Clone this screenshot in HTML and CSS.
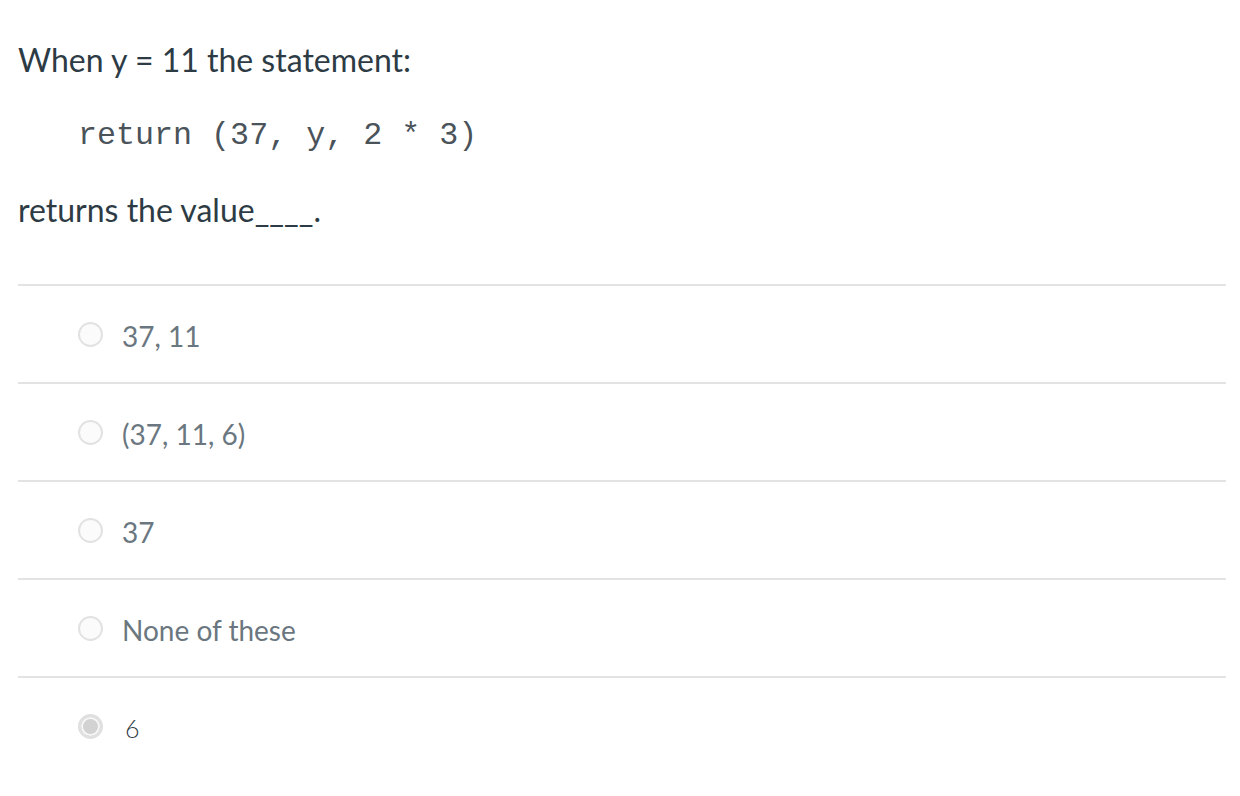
FILE: index.html
```html
<!DOCTYPE html>
<html>
<head>
<meta charset="utf-8">
<link rel="stylesheet" href="styles.css">
</head>
<body>
<div class="question">
  <p class="stem">When y = 11 the statement:</p>
  <pre class="code">return (37, y, 2 * 3)</pre>
  <p class="stem stem-end">returns the value____.</p>
  <div class="answers">
    <div class="answer"><span class="radio"></span><span class="label">37, 11</span></div>
    <div class="answer"><span class="radio"></span><span class="label">(37, 11, 6)</span></div>
    <div class="answer"><span class="radio"></span><span class="label">37</span></div>
    <div class="answer"><span class="radio"></span><span class="label">None of these</span></div>
    <div class="answer selected"><span class="radio"></span><span class="label">6</span></div>
  </div>
</div>
</body>
</html>
```
FILE: styles.css
```css
html, body {
  margin: 0;
  padding: 0;
  background: #ffffff;
}

.question {
  padding: 42px 14px 0 18px;
  font-family: Lato, "Liberation Sans", sans-serif;
  color: #2d3b45;
}

.stem {
  margin: 0;
  font-size: 32px;
  line-height: 36px;
}

.code {
  margin: 38px 0 0 60px;
  font-family: "Liberation Mono", monospace;
  font-size: 31.7px;
  line-height: 40px;
  color: #4a535a;
}

.stem-end {
  margin-top: 36px;
}

.answers {
  margin-top: 56px;
}

.answer {
  display: flex;
  align-items: center;
  gap: 19px;
  height: 96px;
  padding-left: 60px;
  border-top: 2px solid #e3e3e3;
}

.radio {
  box-sizing: border-box;
  width: 25px;
  height: 25px;
  border-radius: 50%;
  border: 2px solid #e2e2e2;
  background: #fbfbfb;
  flex: none;
}

.label {
  font-size: 28px;
  color: #6b7780;
  padding-top: 3px;
}

.selected .radio {
  border: 3px solid #e0e0e0;
  background: #d2d2d2;
  box-shadow: inset 0 0 0 2px #f7f7f7;
}

.selected .label {
  font-weight: 300;
  font-size: 25px;
  color: #2d3b45;
  margin-left: 3px;
}
```
